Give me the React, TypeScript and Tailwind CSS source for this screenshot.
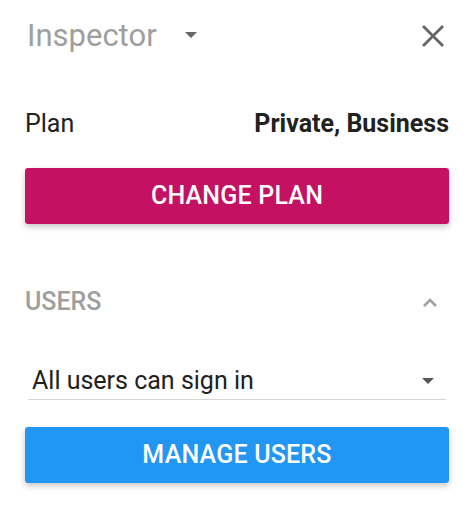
import { ReactNode } from 'react';

function DropTriangle({ className }: { className: string }) {
  return (
    <svg width="12" height="6" viewBox="0 0 12 6" className={className}>
      <polygon points="0,0 12,0 6,6" fill="currentColor" />
    </svg>
  );
}

function CloseIcon() {
  return (
    <svg width="22" height="22" viewBox="0 0 22 22" className="text-[#666666]">
      <line x1="1" y1="1" x2="21" y2="21" stroke="currentColor" strokeWidth="2.8" />
      <line x1="21" y1="1" x2="1" y2="21" stroke="currentColor" strokeWidth="2.8" />
    </svg>
  );
}

function ChevronUp() {
  return (
    <svg width="14" height="9" viewBox="0 0 14 9" className="text-[#a0a0a0]">
      <polyline
        points="1,8 7,2 13,8"
        fill="none"
        stroke="currentColor"
        strokeWidth="2.6"
      />
    </svg>
  );
}

function ActionButton({ color, top, children }: { color: string; top: string; children: ReactNode }) {
  return (
    <button
      className={`flex h-[56px] w-full items-center justify-center rounded-[3px] text-[25px] font-medium tracking-[0.2px] text-white shadow-[0_3px_6px_rgba(0,0,0,0.22)] ${top} ${color}`}
    >
      {children}
    </button>
  );
}

export default function App() {
  return (
    <div className="h-[508px] w-[474px] bg-white px-[25px] font-['Roboto',sans-serif]">
      <header className="flex items-center justify-between pt-[18px]">
        <div className="flex items-center">
          <span className="ml-[2px] text-[31px] leading-[36px] text-[#9e9e9e]">Inspector</span>
          <DropTriangle className="ml-[28px] mb-[3px] text-[#666666]" />
        </div>
        <div className="mr-[5px]">
          <CloseIcon />
        </div>
      </header>

      <div className="mt-[56px] flex items-center justify-between text-[25px] leading-[28px] text-[#212121]">
        <span>Plan</span>
        <span className="font-bold">Private, Business</span>
      </div>

      <ActionButton color="bg-[#c51162]" top="mt-[30px]">
        CHANGE PLAN
      </ActionButton>

      <div className="mt-[64px] flex items-center justify-between">
        <span className="text-[25px] font-medium leading-[28px] text-[#9e9e9e]">USERS</span>
        <div className="mr-[12px]">
          <ChevronUp />
        </div>
      </div>

      <div className="mx-[3px] mt-[51px] flex items-center justify-between border-b border-[#d6d6d6] pb-[4px] pl-[4px]">
        <span className="text-[25px] leading-[28px] text-[#212121]">All users can sign in</span>
        <DropTriangle className="mr-[12px] text-[#555555]" />
      </div>

      <ActionButton color="bg-[#2196f3]" top="mt-[27px]">
        MANAGE USERS
      </ActionButton>
    </div>
  );
}
